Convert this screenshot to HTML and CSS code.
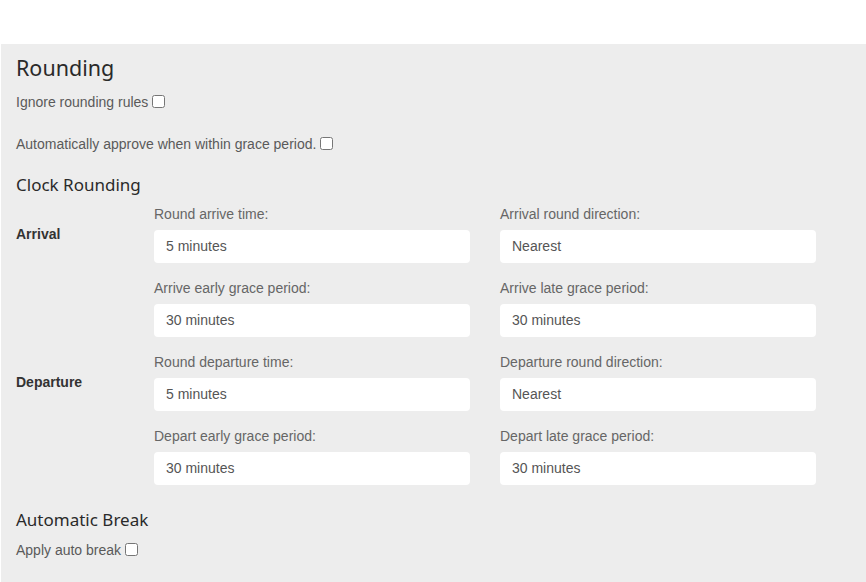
FILE: index.html
```html
<!DOCTYPE html>
<html>
<head>
<meta charset="utf-8">
<link rel="stylesheet" href="styles.css">
</head>
<body>
<div class="top-space"></div>
<div class="panel">
  <h2 class="title">Rounding</h2>
  <div class="check-row">Ignore rounding rules <input type="checkbox"></div>
  <div class="check-row second">Automatically approve when within grace period. <input type="checkbox"></div>
  <h3 class="subtitle">Clock Rounding</h3>

  <div class="group">
    <div class="group-title">Arrival</div>
    <div class="fields">
      <div class="field"><label>Round arrive time:</label><div class="input">5 minutes</div></div>
      <div class="field"><label>Arrival round direction:</label><div class="input">Nearest</div></div>
      <div class="field"><label>Arrive early grace period:</label><div class="input">30 minutes</div></div>
      <div class="field"><label>Arrive late grace period:</label><div class="input">30 minutes</div></div>
    </div>
  </div>

  <div class="group">
    <div class="group-title">Departure</div>
    <div class="fields">
      <div class="field"><label>Round departure time:</label><div class="input">5 minutes</div></div>
      <div class="field"><label>Departure round direction:</label><div class="input">Nearest</div></div>
      <div class="field"><label>Depart early grace period:</label><div class="input">30 minutes</div></div>
      <div class="field"><label>Depart late grace period:</label><div class="input">30 minutes</div></div>
    </div>
  </div>

  <h3 class="subtitle break">Automatic Break</h3>
  <div class="check-row">Apply auto break <input type="checkbox"></div>
</div>
</body>
</html>
```

FILE: styles.css
```css
html, body {
  margin: 0;
  padding: 0;
  background: #ffffff;
}
body {
  font-family: "Liberation Sans", Arial, sans-serif;
  font-size: 14px;
  color: #555;
}
.top-space {
  height: 44px;
}
.panel {
  margin-left: 1px;
  background: #ededed;
  padding: 11px 16px 30px 15px;
}
.title {
  font-family: "Noto Sans", "Open Sans", sans-serif;
  font-weight: 400;
  font-size: 21.5px;
  line-height: 26px;
  color: #2a2a2a;
  margin: 0 0 11px 0;
}
.subtitle {
  font-family: "Noto Sans", "Open Sans", sans-serif;
  font-weight: 400;
  font-size: 17px;
  line-height: 20px;
  color: #2a2a2a;
  margin: 21px 0 9px 0;
}
.subtitle.break {
  margin: 10px 0 10px 0;
}
.check-row {
  line-height: 20px;
  color: #5a5a5a;
}
.check-row.second {
  margin-top: 22px;
}
.check-row input {
  margin: 0;
  width: 13px;
  height: 13px;
  vertical-align: -1px;
}
.group {
  display: flex;
}
.group-title {
  width: 138px;
  flex: none;
  padding-top: 20px;
  font-weight: 700;
  font-size: 14px;
  line-height: 20px;
  color: #333;
}
.fields {
  display: grid;
  grid-template-columns: 316px 316px;
  column-gap: 30px;
}
.field {
  margin-bottom: 15px;
}
.field label {
  display: block;
  line-height: 20px;
  color: #666;
  margin-bottom: 6px;
}
.input {
  background: #ffffff;
  border-radius: 4px;
  height: 33px;
  line-height: 33px;
  padding-left: 12px;
  color: #555;
  box-sizing: border-box;
}
```
